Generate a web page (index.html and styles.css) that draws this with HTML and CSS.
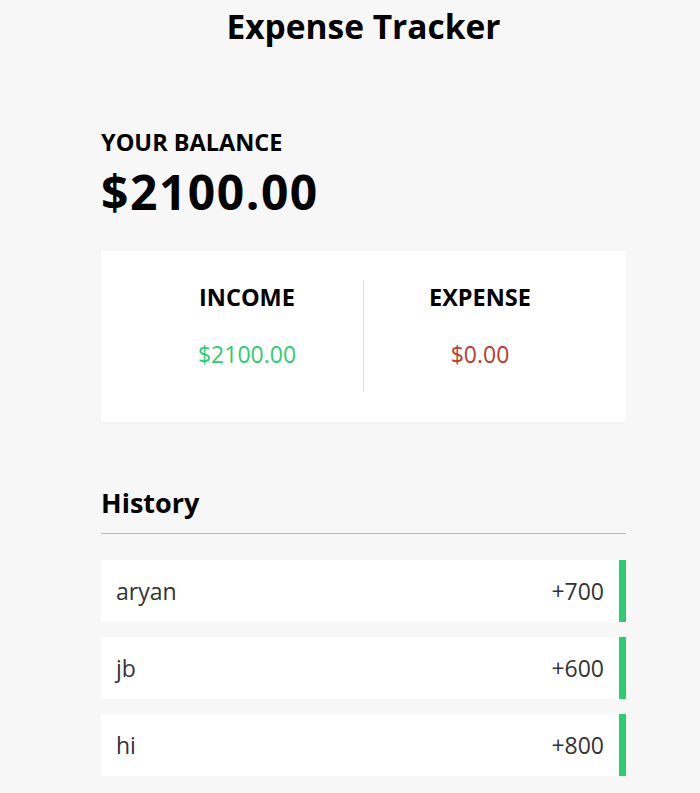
FILE: index.html
```html
<!DOCTYPE html>
<html lang="en">
<head>
    <meta charset="UTF-8">
    <meta name="viewport" content="width=device-width, initial-scale=1.0">
    <title>Expense Tracker</title>
    <link rel="stylesheet" href="styles.css">
</head>
<body>

    <div class="page">
        <h2 class="title">Expense Tracker</h2>

        <div class="container">
            <h4 class="label">Your Balance</h4>
            <h1 class="balance" id="balance">$2100.00</h1>

            <div class="inc-exp">
                <div class="col">
                    <h4 class="label">Income</h4>
                    <p class="money plus" id="money-plus">$2100.00</p>
                </div>
                <div class="col">
                    <h4 class="label">Expense</h4>
                    <p class="money minus" id="money-minus">$0.00</p>
                </div>
            </div>

            <h3 class="history">History</h3>
            <ul class="list" id="list">
                <li class="plus">aryan <span>+700</span></li>
                <li class="plus">jb <span>+600</span></li>
                <li class="plus">hi <span>+800</span></li>
            </ul>
        </div>
    </div>

</body>
</html>
```

FILE: styles.css
```css
body {
    margin: 0;
    padding: 0;
    background: #f7f7f7;
    font-family: "Open Sans", "Noto Sans", sans-serif;
    color: #000;
}

.page {
    width: 700px;
}

.title {
    margin: 0 0 0 27px;
    padding-top: 2px;
    font-size: 33.5px;
    line-height: 48px;
    text-align: center;
}

.container {
    width: 525px;
    margin: 76px 0 0 101px;
}

.label {
    margin: 0;
    font-size: 23.5px;
    line-height: 32px;
    text-transform: uppercase;
}

.balance {
    margin: 4px 0 0;
    font-size: 48px;
    line-height: 60px;
    letter-spacing: 1.5px;
}

.inc-exp {
    display: flex;
    justify-content: space-between;
    margin-top: 29px;
    padding: 30px;
    background: #fff;
    box-shadow: 0 1px 2px rgba(0, 0, 0, 0.04);
}

.inc-exp .col {
    flex: 1;
    text-align: center;
}

.inc-exp .col:first-of-type {
    border-right: 1.5px solid #dedede;
}

.money {
    margin: 25px 0 22px;
    font-size: 23px;
    line-height: 32px;
}

.money.plus {
    color: #2ecc71;
}

.money.minus {
    color: #c0392b;
}

.history {
    margin: 62px 0 0;
    padding-bottom: 12px;
    border-bottom: 1.5px solid #bbb;
    font-size: 27px;
    line-height: 37px;
}

.list {
    list-style-type: none;
    margin: 26px 0 0;
    padding: 0;
}

.list li {
    display: flex;
    justify-content: space-between;
    margin-bottom: 15px;
    padding: 15px;
    background: #fff;
    color: #333;
    font-size: 23px;
    line-height: 32px;
}

.list li.plus {
    border-right: 7.5px solid #2ecc71;
}

.list li.minus {
    border-right: 7.5px solid #c0392b;
}
```
